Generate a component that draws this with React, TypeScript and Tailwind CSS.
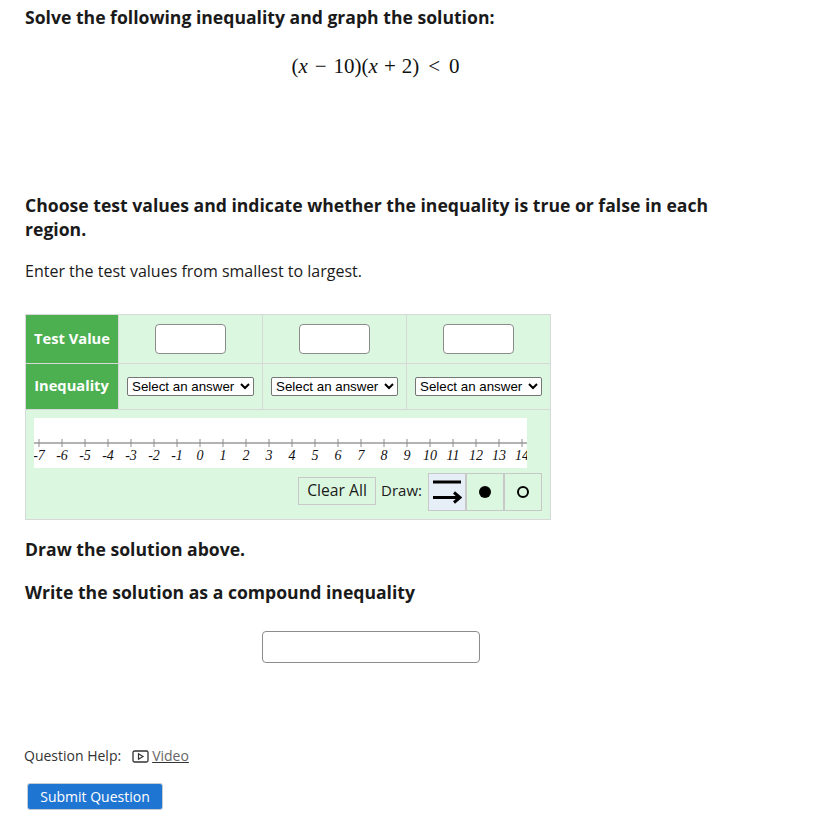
const COLUMNS = [0, 1, 2];
const TICKS = Array.from({ length: 22 }, (_, i) => i - 7);

function NumberLine() {
  return (
    <svg width="493" height="50" className="block bg-white">
      <line x1="0" y1="25" x2="493" y2="25" stroke="#b3b3b3" strokeWidth="2" />
      {TICKS.map((n, i) => (
        <g key={n}>
          <line x1={5 + i * 23} y1="21" x2={5 + i * 23} y2="29" stroke="#8c8c8c" strokeWidth="1" />
          <text
            x={5 + i * 23}
            y="41.5"
            textAnchor="middle"
            className="italic"
            fontSize="14"
            fontFamily="'Liberation Serif', serif"
            fill="#111"
          >
            {n}
          </text>
        </g>
      ))}
    </svg>
  );
}

function SelectBox() {
  return (
    <select
      defaultValue=""
      className="h-[19px] w-[127px] rounded-[2px] border border-[#767676] bg-white text-[13.33px] leading-none text-black [font-family:'Liberation_Sans',Arial,sans-serif]"
    >
      <option value="">Select an answer</option>
      <option value="true">True</option>
      <option value="false">False</option>
    </select>
  );
}

function DrawButton({ active, children }: { active?: boolean; children: React.ReactNode }) {
  return (
    <div
      className={`flex h-[38px] w-[38px] items-center justify-center border border-[#c8c8c8] ${
        active ? 'bg-[#e6eff8]' : ''
      }`}
    >
      {children}
    </div>
  );
}

export default function App() {
  return (
    <div className="min-h-[826px] bg-white pl-[25px] text-[#1a1a1a] [font-family:'Open_Sans',sans-serif]">
      <h1 className="pt-[5px] text-[17.6px] leading-6 font-bold">
        Solve the following inequality and graph the solution:
      </h1>

      <p className="mt-[25px] w-[701px] text-center text-[21px] leading-6 text-[#111] [font-family:'Liberation_Serif',serif]">
        (<i>x</i>
        <span className="mx-[7px]">−</span>10)(<i>x</i>
        <span className="mx-[6px]">+</span>2)
        <span className="mx-[9px]">&lt;</span>0
      </p>

      <h2 className="mt-[115px] w-[700px] text-[17.6px] leading-6 font-bold">
        Choose test values and indicate whether the inequality is true or false in each region.
      </h2>

      <p className="mt-[18px] text-base leading-6">Enter the test values from smallest to largest.</p>

      <div className="mt-[31px] w-[526px] border border-[#d8d8d8] bg-[#dcf7df]">
        <div className="grid h-[49px] grid-cols-[92px_144px_144px_144px] border-b border-[#d8d8d8]">
          <div className="flex items-center justify-center bg-[#4caf50] pb-[2px] text-[14.7px] font-bold text-white">
            Test Value
          </div>
          {COLUMNS.map((c) => (
            <div key={c} className="flex items-center justify-center border-l border-[#d8d8d8] first:border-l-0">
              <input type="text" className="h-[30px] w-[71px] rounded-[4px] border border-[#8c8c8c] bg-white" />
            </div>
          ))}
        </div>
        <div className="grid h-[46px] grid-cols-[92px_144px_144px_144px] border-b border-[#d8d8d8]">
          <div className="flex items-center justify-center bg-[#4caf50] pr-px pb-[2px] text-[14.7px] font-bold text-white">
            Inequality
          </div>
          {COLUMNS.map((c) => (
            <div key={c} className="flex items-center justify-center border-l border-[#d8d8d8]">
              <SelectBox />
            </div>
          ))}
        </div>
        <div className="h-[109px] pt-2 pl-2">
          <NumberLine />
          <div className="mt-[5px] flex items-center justify-end pr-[8px]">
            <button className="mb-[2px] h-[28px] w-[78px] border border-[#c8c8c8] text-[15.7px]">Clear All</button>
            <span className="mr-[6px] mb-[3px] ml-[5px] text-[15px]">Draw:</span>
            <DrawButton active>
              <svg width="30" height="30" viewBox="0 0 30 30">
                <path d="M1 5h28" stroke="#000" strokeWidth="3" fill="none" />
                <path d="M1 20.5h27M22 15.5l6 5-6 5" stroke="#000" strokeWidth="3" fill="none" />
              </svg>
            </DrawButton>
            <DrawButton>
              <span className="h-[12px] w-[12px] rounded-full bg-black" />
            </DrawButton>
            <DrawButton>
              <span className="h-[12px] w-[12px] rounded-full border-2 border-black" />
            </DrawButton>
          </div>
        </div>
      </div>

      <p className="mt-[17px] text-[17.6px] leading-6 font-bold">Draw the solution above.</p>
      <p className="mt-[19px] text-[17.6px] leading-6 font-bold">Write the solution as a compound inequality</p>

      <div className="mt-[27px] w-[692px] text-center">
        <input type="text" className="h-[32px] w-[218px] rounded-[4px] border border-[#8c8c8c] bg-white" />
      </div>

      <div className="mt-[83px] -ml-px flex items-center text-sm text-[#333]">
        <span>Question Help:</span>
        <span className="ml-[11px] flex items-center underline">
          <svg width="18" height="13" viewBox="0 0 18 13" className="mr-[2px]">
            <rect x="1" y="1" width="15" height="11" rx="1.5" fill="none" stroke="#333" strokeWidth="1.3" />
            <path d="M6.5 3.8v5.4l4.5-2.7z" fill="none" stroke="#333" strokeWidth="1.2" />
          </svg>
          <span className="text-[#666]">Video</span>
        </span>
      </div>

      <button className="mt-[17px] ml-[2px] h-[27px] w-[136px] rounded-[3px] border border-[#c4ccd6] bg-[#1f76d2] text-sm text-white">
        Submit Question
      </button>
    </div>
  );
}
